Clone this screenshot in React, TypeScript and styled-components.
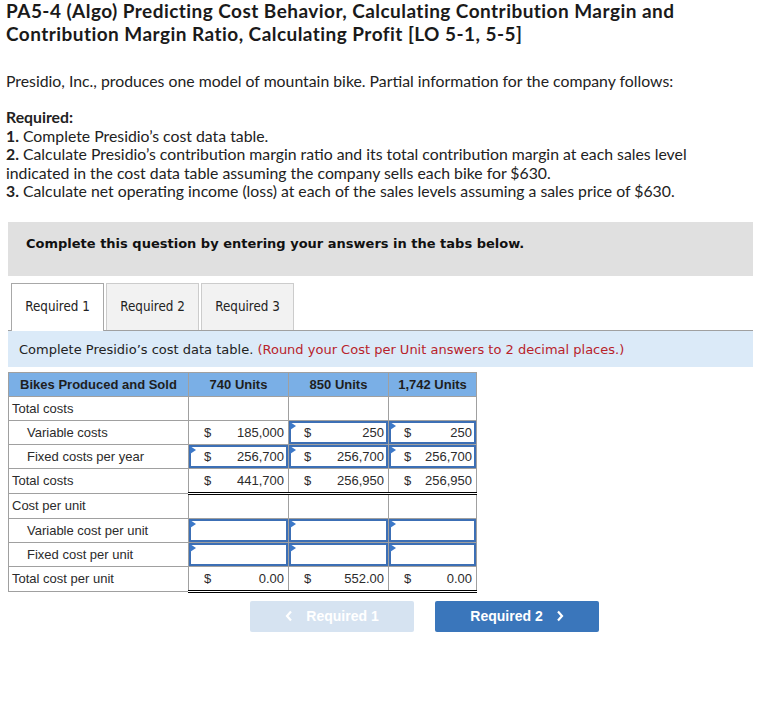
import React from 'react';
import styled, { createGlobalStyle } from 'styled-components';

const GlobalStyle = createGlobalStyle`
  body {
    margin: 0;
    background: #ffffff;
    color: #1f1f1f;
  }
`;

const Page = styled.div`
  width: 745px;
  padding-left: 8px;
  font-family: Lato, 'Liberation Sans', sans-serif;
`;

const Title = styled.h1`
  margin: -1px 0 0 -2px;
  font-size: 19px;
  line-height: 23px;
  font-weight: 700;
  letter-spacing: 0.45px;
  color: #1a1a1a;
`;

const Intro = styled.p`
  margin: 27px 0 0 -2px;
  font-size: 15.8px;
  line-height: 18.5px;
  color: #222;
`;

const Required = styled.div`
  max-width: 725px;
  margin: 17.5px 0 0 -2px;
  font-size: 15.8px;
  line-height: 18.5px;
  color: #222;
  b {
    font-weight: 700;
  }
`;

const Banner = styled.div`
  margin-top: 21px;
  height: 54px;
  box-sizing: border-box;
  padding: 14px 18px 0;
  background: #e0e0e0;
  font-family: 'DejaVu Sans', sans-serif;
  font-size: 13px;
  line-height: 16px;
  font-weight: 700;
  color: #111;
`;

const TabBar = styled.div`
  display: flex;
  gap: 2px;
  margin-top: 7px;
  padding-left: 3px;
  border-bottom: 1px solid #a0a0a0;
`;

const Tab = styled.div<{ $active?: boolean }>`
  width: 93px;
  box-sizing: border-box;
  display: flex;
  align-items: center;
  justify-content: center;
  border: 1px solid ${(p) => (p.$active ? '#a8a8a8' : '#cccccc')};
  border-bottom: none;
  background: ${(p) => (p.$active ? '#ffffff' : '#f2f2f2')};
  margin-bottom: ${(p) => (p.$active ? '-1px' : '0')};
  height: ${(p) => (p.$active ? '48px' : '47px')};
  padding-bottom: ${(p) => (p.$active ? '1px' : '0')};
  font-family: 'DejaVu Sans Condensed', 'DejaVu Sans', sans-serif;
  font-size: 13.3px;
  color: #222;
`;

const Instruction = styled.div`
  height: 36px;
  box-sizing: border-box;
  padding: 11px 11px 0;
  background: #dbeaf8;
  font-family: 'DejaVu Sans', sans-serif;
  font-size: 13px;
  line-height: 16px;
  color: #222;
  span {
    color: #b8232b;
  }
`;

const Table = styled.table`
  margin-top: 5px;
  border-collapse: collapse;
  font-family: 'Liberation Sans', Arial, sans-serif;
  font-size: 13px;
  color: #2b2b2b;
`;

const Th = styled.th<{ $w: number }>`
  width: ${(p) => p.$w}px;
  height: 23px;
  padding: 0;
  background: #7aafe6;
  border: 1px solid #a0a0a0;
  font-weight: 700;
  color: #1e1e1e;
  text-align: center;
`;

const LabelCell = styled.td<{ $indent?: boolean }>`
  height: 23px;
  padding: 0 0 0 ${(p) => (p.$indent ? '18px' : '3px')};
  border: 1px solid #a0a0a0;
  white-space: nowrap;
`;

const ValueCell = styled.td<{ $total?: boolean }>`
  height: 23px;
  padding: 0;
  border: 1px solid #a0a0a0;
  border-bottom: ${(p) => (p.$total ? '3px double #000' : '1px solid #a0a0a0')};
`;

const Amount = styled.div<{ $input?: boolean }>`
  position: relative;
  display: flex;
  justify-content: space-between;
  align-items: center;
  height: 23px;
  box-sizing: border-box;
  padding: 0 2px 0 13px;
  border: 2px solid ${(p) => (p.$input ? '#3c6fb5' : 'transparent')};
`;

const Flag = styled.span`
  position: absolute;
  top: -1px;
  left: -1px;
  width: 0;
  height: 0;
  border-top: 4px solid transparent;
  border-bottom: 4px solid transparent;
  border-left: 6px solid #3c78c8;
`;

const Actions = styled.div`
  display: flex;
  gap: 21px;
  margin: 8px 0 0 242px;
`;

const NavButton = styled.button<{ $disabled?: boolean }>`
  width: 164px;
  height: 31px;
  border: none;
  border-radius: 2px;
  background: ${(p) => (p.$disabled ? '#d6e3f1' : '#3a76bb')};
  color: #ffffff;
  font-family: 'Liberation Sans', Arial, sans-serif;
  font-size: 14px;
  font-weight: 700;
  display: flex;
  align-items: center;
  justify-content: center;
  gap: 13px;
  cursor: ${(p) => (p.$disabled ? 'default' : 'pointer')};
`;

type Cell = { value?: string; input?: boolean; dollar?: boolean };
type Row = { label: string; indent?: boolean; total?: boolean; cells: Cell[] };

const blank: Cell[] = [{}, {}, {}];
const emptyInputs: Cell[] = [{ input: true }, { input: true }, { input: true }];

const rows: Row[] = [
  { label: 'Total costs', cells: blank },
  {
    label: 'Variable costs',
    indent: true,
    cells: [
      { value: '185,000', dollar: true },
      { value: '250', dollar: true, input: true },
      { value: '250', dollar: true, input: true },
    ],
  },
  {
    label: 'Fixed costs per year',
    indent: true,
    cells: [
      { value: '256,700', dollar: true, input: true },
      { value: '256,700', dollar: true, input: true },
      { value: '256,700', dollar: true, input: true },
    ],
  },
  {
    label: 'Total costs',
    total: true,
    cells: [
      { value: '441,700', dollar: true },
      { value: '256,950', dollar: true },
      { value: '256,950', dollar: true },
    ],
  },
  { label: 'Cost per unit', cells: blank },
  { label: 'Variable cost per unit', indent: true, cells: emptyInputs },
  { label: 'Fixed cost per unit', indent: true, cells: emptyInputs },
  {
    label: 'Total cost per unit',
    total: true,
    cells: [
      { value: '0.00', dollar: true },
      { value: '552.00', dollar: true },
      { value: '0.00', dollar: true },
    ],
  },
];

const Chevron = ({ dir }: { dir: 'left' | 'right' }) => (
  <svg width="8" height="12" viewBox="0 0 8 12">
    <path
      d={dir === 'left' ? 'M6 1.5 L2 6 L6 10.5' : 'M2 1.5 L6 6 L2 10.5'}
      fill="none"
      stroke="#fff"
      strokeWidth="2.2"
    />
  </svg>
);

export default function App() {
  return (
    <Page>
      <GlobalStyle />
      <Title>
        PA5-4 (Algo) Predicting Cost Behavior, Calculating Contribution Margin and Contribution
        Margin Ratio, Calculating Profit [LO 5-1, 5-5]
      </Title>
      <Intro>
        Presidio, Inc., produces one model of mountain bike. Partial information for the company
        follows:
      </Intro>
      <Required>
        <b>Required:</b>
        <br />
        <b>1.</b> Complete Presidio’s cost data table.
        <br />
        <b>2.</b> Calculate Presidio’s contribution margin ratio and its total contribution margin at
        each sales level indicated in the cost data table assuming the company sells each bike for
        $630.
        <br />
        <b>3.</b> Calculate net operating income (loss) at each of the sales levels assuming a sales
        price of $630.
      </Required>

      <Banner>Complete this question by entering your answers in the tabs below.</Banner>

      <TabBar>
        <Tab $active>Required 1</Tab>
        <Tab>Required 2</Tab>
        <Tab>Required 3</Tab>
      </TabBar>
      <Instruction>
        Complete Presidio’s cost data table. <span>(Round your Cost per Unit answers to 2 decimal places.)</span>
      </Instruction>

      <Table>
        <thead>
          <tr>
            <Th $w={179}>Bikes Produced and Sold</Th>
            <Th $w={99}>740 Units</Th>
            <Th $w={99}>850 Units</Th>
            <Th $w={87}>1,742 Units</Th>
          </tr>
        </thead>
        <tbody>
          {rows.map((row, i) => (
            <tr key={i}>
              <LabelCell $indent={row.indent}>{row.label}</LabelCell>
              {row.cells.map((c, j) => (
                <ValueCell key={j} $total={row.total}>
                  <Amount $input={c.input}>
                    {c.input && <Flag />}
                    <span>{c.dollar ? '$' : ''}</span>
                    <span>{c.value ?? ''}</span>
                  </Amount>
                </ValueCell>
              ))}
            </tr>
          ))}
        </tbody>
      </Table>

      <Actions>
        <NavButton $disabled>
          <Chevron dir="left" />
          Required 1
        </NavButton>
        <NavButton>
          Required 2
          <Chevron dir="right" />
        </NavButton>
      </Actions>
    </Page>
  );
}
